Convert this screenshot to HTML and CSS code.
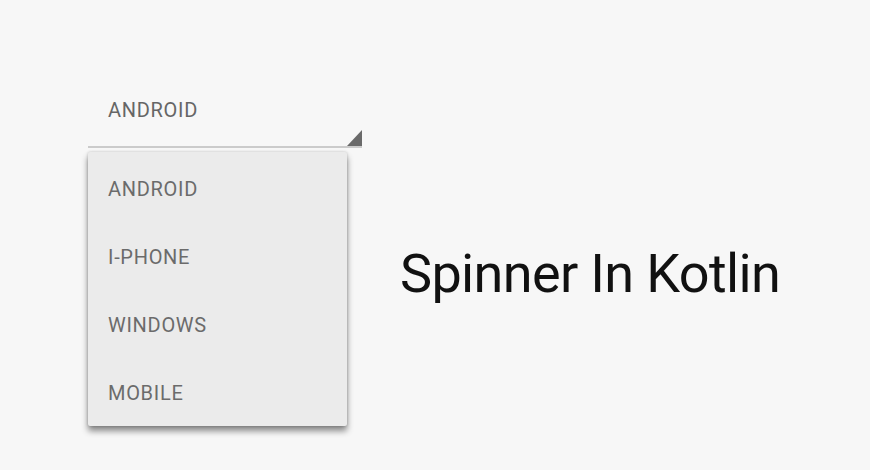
FILE: index.html
```html
<!DOCTYPE html>
<html lang="en">
<head>
  <meta charset="UTF-8">
  <meta name="viewport" content="width=device-width, initial-scale=1.0">
  <title>Spinner In Kotlin</title>
  <link rel="stylesheet" href="styles.css">
</head>
<body>

  <div class="page">
    <div class="spinner">
      <div class="spinner-head">
        <span class="spinner-value">ANDROID</span>
        <span class="spinner-arrow"></span>
      </div>
      <ul class="spinner-list">
        <li>ANDROID</li>
        <li>I-PHONE</li>
        <li>WINDOWS</li>
        <li>MOBILE</li>
      </ul>
    </div>

    <h1 class="title">Spinner In Kotlin</h1>
  </div>

</body>
</html>
```

FILE: styles.css
```css
body {
  margin: 0;
  background-color: #f7f7f7;
  font-family: Roboto, "Noto Sans", Arial, sans-serif;
}
.page {
  display: flex;
  align-items: flex-start;
  padding-left: 88px;
  height: 470px;
  box-sizing: border-box;
  overflow: hidden;
}
.spinner {
  width: 274px;
  margin-top: 99px;
}
.spinner-head {
  display: flex;
  justify-content: space-between;
  align-items: flex-end;
  height: 47px;
  border-bottom: 2px solid #cbcbcb;
}
.spinner-value {
  align-self: flex-start;
  padding-left: 20px;
  font-size: 20px;
  line-height: 23px;
  letter-spacing: 0.7px;
  color: #666;
}
.spinner-arrow {
  width: 0;
  height: 0;
  border-left: 15px solid transparent;
  border-bottom: 16px solid #6a6a6a;
}
.spinner-list {
  list-style: none;
  margin: 4px 0 0;
  padding: 3px 0 0;
  width: 259px;
  height: 274px;
  box-sizing: border-box;
  background-color: #ebebeb;
  border-radius: 2px;
  box-shadow: 0 5px 6px rgba(0, 0, 0, 0.45), 0 0 3px rgba(0, 0, 0, 0.2);
}
.spinner-list li {
  display: flex;
  align-items: center;
  height: 68px;
  padding-left: 20px;
  font-size: 20px;
  letter-spacing: 0.7px;
  color: #6b6b6b;
}
.title {
  margin: 242px 0 0 38px;
  font-size: 54px;
  font-weight: normal;
  letter-spacing: -0.65px;
  color: #111;
  white-space: nowrap;
}
```
